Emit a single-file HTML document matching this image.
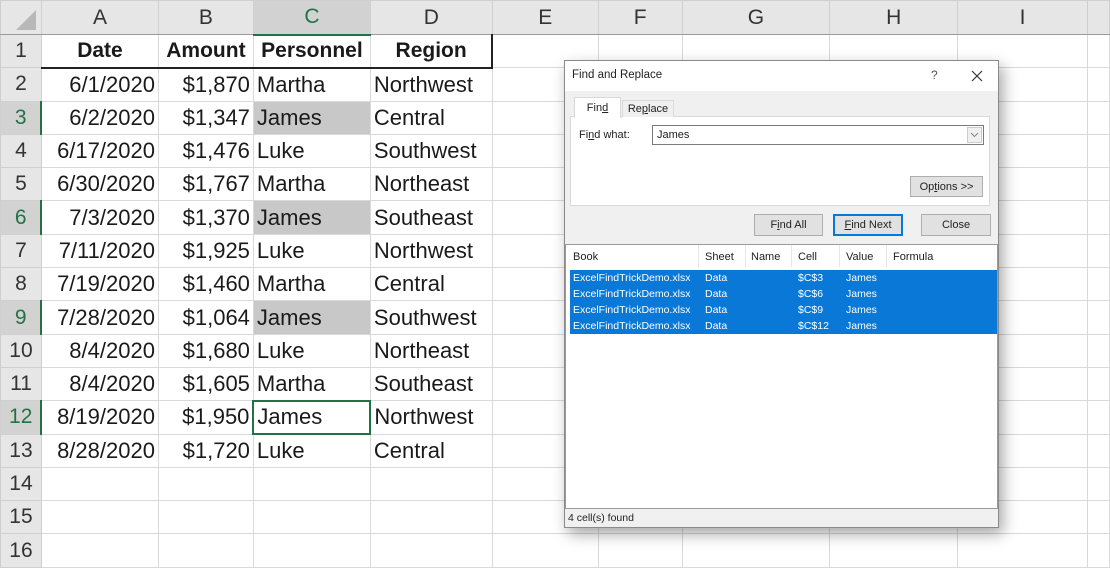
<!DOCTYPE html>
<html><head><meta charset="utf-8"><style>
*{margin:0;padding:0;box-sizing:border-box}
body{width:1110px;height:570px;overflow:hidden;background:#fff;font-family:"Liberation Sans",sans-serif;position:relative}
table{border-collapse:collapse;table-layout:fixed;position:absolute;left:0;top:0}
td{border:1px solid #d9d9d9;height:33.3px;font-size:22px;color:#1a1a1a;white-space:nowrap;overflow:hidden;padding:0 3px;line-height:30px}
tr.h td{height:34px;background:#e6e6e6;text-align:center;color:#333;font-size:21px;border-color:#cfcfcf;border-bottom:1px solid #9a9a9a}
td.rh{background:#e6e6e6;text-align:center;color:#333;font-size:21px;border-color:#cfcfcf;padding:0}
td.rs{background:#d2d2d2;color:#217346;border-right:2px solid #217346}
td.r{text-align:right}
td.b{font-weight:bold;text-align:center;font-size:21px}
td.s{background:#c8c8c8}
tr.h td.cs{background:#d2d2d2;color:#217346;border-bottom:2px solid #217346}
.dlg{position:absolute;left:564px;top:60px;width:435px;height:468px;background:#f0f0f0;border:1px solid #8a8a8a;box-shadow:4px 6px 14px rgba(0,0,0,.35);font-size:11px;color:#222}
.a{position:absolute}
.btn{position:absolute;border:1px solid #adadad;background:#e1e1e1;text-align:center;line-height:20px;font-size:11px}
.row{position:absolute;left:4px;width:427px;height:16px;background:#0a78d7;color:#fff;line-height:16px;font-size:10.5px}
.row span{position:absolute}
</style></head><body>
<table>
<colgroup><col style="width:41px"><col style="width:117px"><col style="width:95px"><col style="width:117px"><col style="width:122px"><col style="width:106px"><col style="width:84px"><col style="width:148px"><col style="width:128px"><col style="width:130px"><col style="width:22px"></colgroup>
<tr class="h"><td style="background:#e6e6e6"></td><td>A</td><td>B</td><td class="cs">C</td><td>D</td><td>E</td><td>F</td><td>G</td><td>H</td><td>I</td><td></td></tr>
<tr><td class="rh">1</td><td class="b" style="border-bottom:2px solid #222">Date</td><td class="b" style="border-bottom:2px solid #222">Amount</td><td class="b" style="border-bottom:2px solid #222">Personnel</td><td class="b" style="border-bottom:2px solid #222;border-right:2px solid #222">Region</td><td></td><td></td><td></td><td></td><td></td><td></td></tr>
<tr><td class="rh">2</td><td class="r">6/1/2020</td><td class="r">$1,870</td><td>Martha</td><td>Northwest</td><td></td><td></td><td></td><td></td><td></td><td></td></tr>
<tr><td class="rh rs">3</td><td class="r">6/2/2020</td><td class="r">$1,347</td><td class="s">James</td><td>Central</td><td></td><td></td><td></td><td></td><td></td><td></td></tr>
<tr><td class="rh">4</td><td class="r">6/17/2020</td><td class="r">$1,476</td><td>Luke</td><td>Southwest</td><td></td><td></td><td></td><td></td><td></td><td></td></tr>
<tr><td class="rh">5</td><td class="r">6/30/2020</td><td class="r">$1,767</td><td>Martha</td><td>Northeast</td><td></td><td></td><td></td><td></td><td></td><td></td></tr>
<tr><td class="rh rs">6</td><td class="r">7/3/2020</td><td class="r">$1,370</td><td class="s">James</td><td>Southeast</td><td></td><td></td><td></td><td></td><td></td><td></td></tr>
<tr><td class="rh">7</td><td class="r">7/11/2020</td><td class="r">$1,925</td><td>Luke</td><td>Northwest</td><td></td><td></td><td></td><td></td><td></td><td></td></tr>
<tr><td class="rh">8</td><td class="r">7/19/2020</td><td class="r">$1,460</td><td>Martha</td><td>Central</td><td></td><td></td><td></td><td></td><td></td><td></td></tr>
<tr><td class="rh rs">9</td><td class="r">7/28/2020</td><td class="r">$1,064</td><td class="s">James</td><td>Southwest</td><td></td><td></td><td></td><td></td><td></td><td></td></tr>
<tr><td class="rh">10</td><td class="r">8/4/2020</td><td class="r">$1,680</td><td>Luke</td><td>Northeast</td><td></td><td></td><td></td><td></td><td></td><td></td></tr>
<tr><td class="rh">11</td><td class="r">8/4/2020</td><td class="r">$1,605</td><td>Martha</td><td>Southeast</td><td></td><td></td><td></td><td></td><td></td><td></td></tr>
<tr><td class="rh rs">12</td><td class="r">8/19/2020</td><td class="r">$1,950</td><td style="border:2px solid #217346">James</td><td>Northwest</td><td></td><td></td><td></td><td></td><td></td><td></td></tr>
<tr><td class="rh">13</td><td class="r">8/28/2020</td><td class="r">$1,720</td><td>Luke</td><td>Central</td><td></td><td></td><td></td><td></td><td></td><td></td></tr>
<tr><td class="rh">14</td><td></td><td></td><td></td><td></td><td></td><td></td><td></td><td></td><td></td><td></td></tr>
<tr><td class="rh">15</td><td></td><td></td><td></td><td></td><td></td><td></td><td></td><td></td><td></td><td></td></tr>
<tr><td class="rh">16</td><td></td><td></td><td></td><td></td><td></td><td></td><td></td><td></td><td></td><td></td></tr>
</table>
<svg class="a" style="left:14px;top:8px" width="24" height="24"><polygon points="22,2 22,22 2,22" fill="#b8b8b8"/></svg>

<div class="dlg">
 <div class="a" style="left:0;top:0;width:433px;height:30px;background:#fff"></div>
 <div class="a" style="left:7px;top:8px;font-size:11.5px">Find and Replace</div>
 <div class="a" style="left:366px;top:7px;font-size:12px;color:#555">?</div>
 <svg class="a" style="left:406px;top:9px" width="12" height="12"><path d="M1 1L11 11M11 1L1 11" stroke="#333" stroke-width="1.2"/></svg>
 <div class="a" style="left:5px;top:55px;width:420px;height:90px;background:#fff;border:1px solid #d9d9d9"></div>
 <div class="a" style="left:9px;top:36px;width:47px;height:21px;background:#fff;border:1px solid #d9d9d9;border-bottom:none;text-align:center;line-height:20px">Fin<u>d</u></div>
 <div class="a" style="left:57px;top:39px;width:52px;height:17px;background:#f0f0f0;border:1px solid #d9d9d9;border-bottom:none;text-align:center;line-height:16px">Re<u>p</u>lace</div>
 <div class="a" style="left:14px;top:68px">Fi<u>n</u>d what:</div>
 <div class="a" style="left:87px;top:64px;width:332px;height:20px;background:#fff;border:1px solid #7a7a7a"><span class="a" style="left:4px;top:3px">James</span>
  <div class="a" style="right:1px;top:1px;width:15px;height:16px;border:1px solid #ccc;background:#f0f0f0"><svg width="13" height="14"><path d="M3 5L6.5 8.5L10 5" stroke="#888" fill="none"/></svg></div></div>
 <div class="btn" style="left:345px;top:115px;width:73px;height:21px">Op<u>t</u>ions &gt;&gt;</div>
 <div class="btn" style="left:189px;top:153px;width:69px;height:22px">F<u>i</u>nd All</div>
 <div class="btn" style="left:268px;top:153px;width:70px;height:22px;border:2px solid #0a78d7;line-height:18px"><u>F</u>ind Next</div>
 <div class="btn" style="left:356px;top:153px;width:70px;height:22px">Close</div>
 <div class="a" style="left:0;top:183px;width:433px;height:265px;background:#fff;border:1px solid #9a9a9a">
  <div class="a" style="left:7px;top:6px">Book</div>
  <div class="a" style="left:132px;top:0;height:22px;border-left:1px solid #e5e5e5"></div>
  <div class="a" style="left:139px;top:6px">Sheet</div>
  <div class="a" style="left:179px;top:0;height:22px;border-left:1px solid #e5e5e5"></div>
  <div class="a" style="left:185px;top:6px">Name</div>
  <div class="a" style="left:225px;top:0;height:22px;border-left:1px solid #e5e5e5"></div>
  <div class="a" style="left:232px;top:6px">Cell</div>
  <div class="a" style="left:273px;top:0;height:22px;border-left:1px solid #e5e5e5"></div>
  <div class="a" style="left:280px;top:6px">Value</div>
  <div class="a" style="left:320px;top:0;height:22px;border-left:1px solid #e5e5e5"></div>
  <div class="a" style="left:327px;top:6px">Formula</div>
  <div class="row" style="top:25px"><span style="left:3px">ExcelFindTrickDemo.xlsx</span><span style="left:135px">Data</span><span style="left:228px">$C$3</span><span style="left:276px">James</span></div>
  <div class="row" style="top:41px"><span style="left:3px">ExcelFindTrickDemo.xlsx</span><span style="left:135px">Data</span><span style="left:228px">$C$6</span><span style="left:276px">James</span></div>
  <div class="row" style="top:57px"><span style="left:3px">ExcelFindTrickDemo.xlsx</span><span style="left:135px">Data</span><span style="left:228px">$C$9</span><span style="left:276px">James</span></div>
  <div class="row" style="top:73px"><span style="left:3px">ExcelFindTrickDemo.xlsx</span><span style="left:135px">Data</span><span style="left:228px">$C$12</span><span style="left:276px">James</span></div>
 </div>
 <div class="a" style="left:3px;top:451px;font-size:10.5px">4 cell(s) found</div>
</div>
</body></html>
